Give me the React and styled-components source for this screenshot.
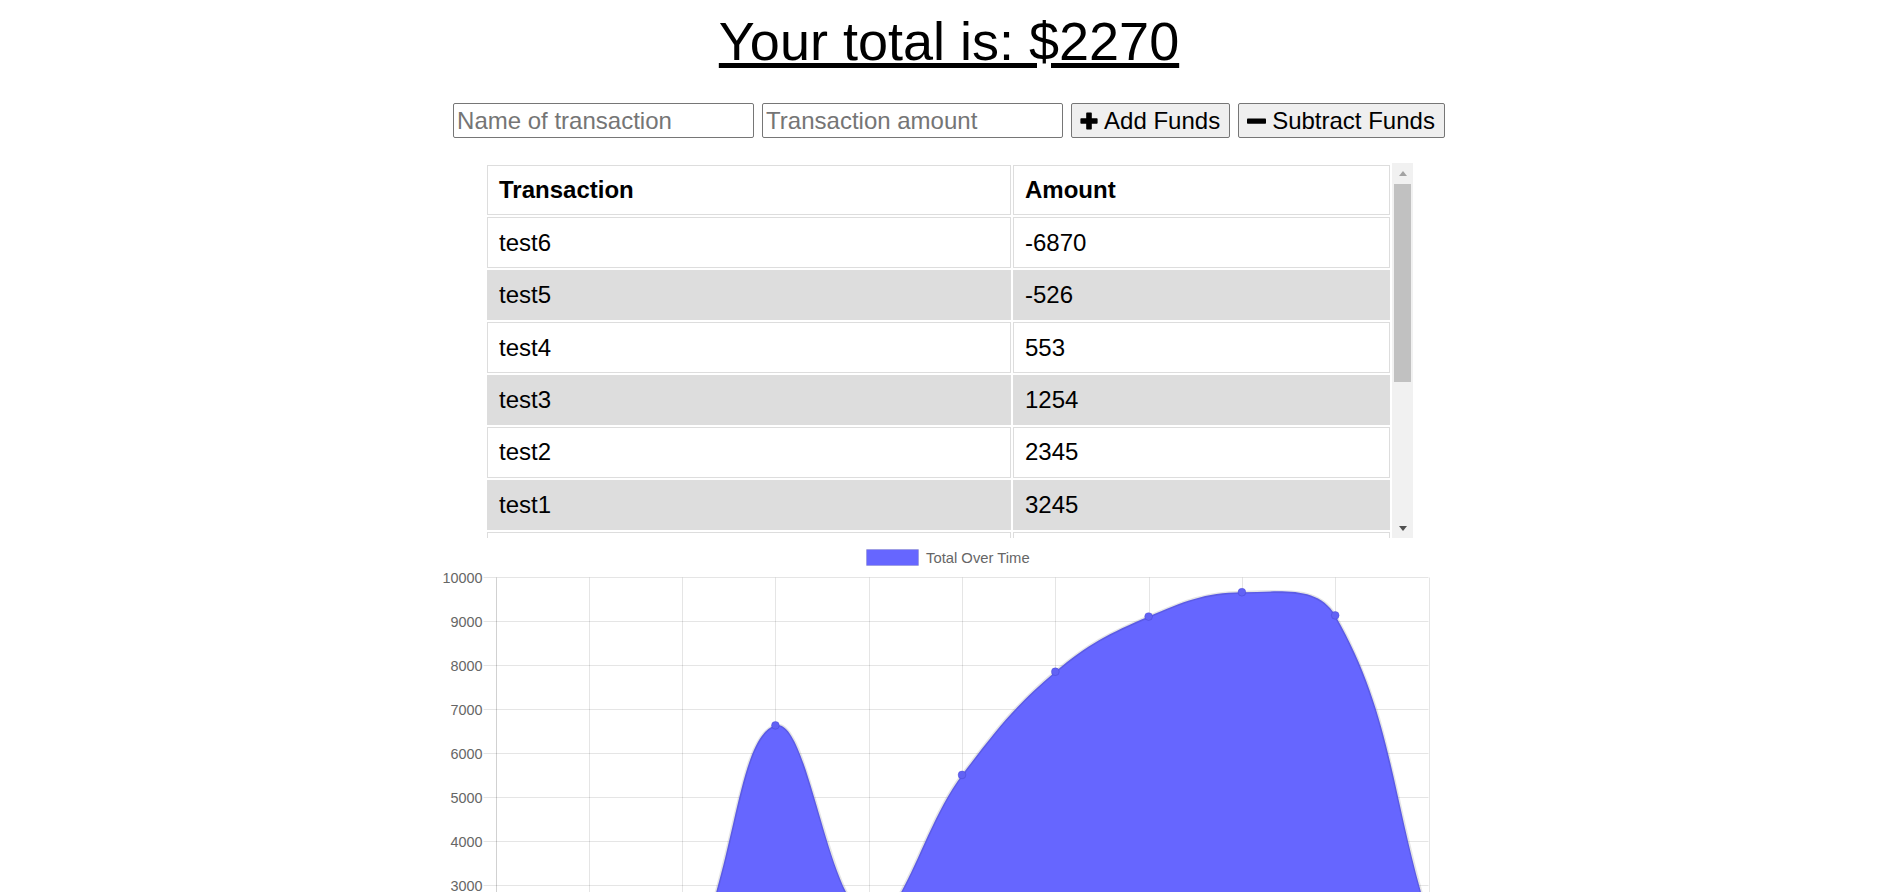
import React from 'react'
import styled, { createGlobalStyle } from 'styled-components'

const GlobalStyle = createGlobalStyle`
    html, body {
        margin: 0;
        padding: 0;
        background: #fff;
        font-family: "Liberation Sans", Arial, sans-serif;
        color: #000;
        overflow: hidden;
    }
`

const Page = styled.div`
    display: flex;
    flex-direction: column;
    align-items: center;
    padding-top: 10px;
    height: 892px;
    box-sizing: border-box;
    overflow: hidden;
`

const Title = styled.h1`
    margin: 0;
    font-size: 54px;
    line-height: 62px;
    font-weight: 400;
    text-decoration: underline;
`

const Form = styled.form`
    display: flex;
    gap: 8px;
    margin-top: 31px;
`

const TextInput = styled.input`
    width: 301px;
    height: 35px;
    box-sizing: border-box;
    padding: 1px 3px;
    border: 1px solid #767676;
    border-radius: 2px;
    font-family: inherit;
    font-size: 24px;
    color: #000;
    &::placeholder {
        color: #757575;
    }
`

const FundButton = styled.button`
    display: inline-flex;
    align-items: center;
    gap: 6px;
    height: 35px;
    box-sizing: border-box;
    padding: 0 9px 0 8px;
    border: 1px solid #767676;
    border-radius: 2px;
    background: #efefef;
    font-family: inherit;
    font-size: 24px;
    color: #000;
`

const TableFrame = styled.div`
    display: flex;
    width: 928px;
    height: 375px;
    margin-top: 25px;
`

const TableScroll = styled.div`
    flex: 1;
    overflow: hidden;
`

const Table = styled.table`
    width: 907px;
    table-layout: fixed;
    border-collapse: separate;
    border-spacing: 2px;
    font-size: 24px;
`

const Cell = styled.td`
    box-sizing: border-box;
    height: 50.45px;
    padding: 0 11px;
    border: 1px solid #ddd;
    text-align: left;
    line-height: 48px;
    white-space: nowrap;
    width: ${p => p.$first ? '524px' : 'auto'};
    font-weight: ${p => p.$head ? 700 : 400};
`

const Row = styled.tr`
    background: ${p => p.$shade ? '#ddd' : '#fff'};
`

const ScrollTrack = styled.div`
    display: flex;
    flex-direction: column;
    align-items: center;
    width: 21px;
    background: #f1f1f1;
`

const ArrowButton = styled.div`
    display: flex;
    align-items: center;
    justify-content: center;
    width: 21px;
    height: 21px;
    &::after {
        content: '';
        width: 0;
        height: 0;
        border-left: 4.5px solid transparent;
        border-right: 4.5px solid transparent;
        ${p => p.$down
            ? 'border-top: 5px solid #505050; margin-top: 2px;'
            : 'border-bottom: 5px solid #a3a3a3; margin-bottom: 1px;'}
    }
`

const Thumb = styled.div`
    width: 17px;
    height: 198px;
    background: #c1c1c1;
`

const Spacer = styled.div`
    flex: 1;
`

const ChartBox = styled.svg`
    display: block;
    flex-shrink: 0;
    font-family: "Liberation Sans", Arial, sans-serif;
`

const transactions = [
    { name: 'test6', value: -6870 },
    { name: 'test5', value: -526 },
    { name: 'test4', value: 553 },
    { name: 'test3', value: 1254 },
    { name: 'test2', value: 2345 },
    { name: 'test1', value: 3245 },
]

const totals = [0, 0, 1000, 6640, 2269, 5514, 7859, 9113, 9666, 9140, 2270]

const area = { left: 495.5, right: 1428.5, top: 577.5, bottom: 1017.5 }
const xAt = i => area.left + i * (area.right - area.left) / (totals.length - 1)
const yAt = v => area.top + (10000 - v) * 0.044

const clamp = (v, lo, hi) => Math.min(hi, Math.max(lo, v))

const splinePath = (pts, t = 0.4) => {
    const ctrl = pts.map((p, i) => {
        const prev = pts[i - 1] || p
        const next = pts[i + 1] || p
        const d01 = Math.hypot(p.x - prev.x, p.y - prev.y)
        const d12 = Math.hypot(next.x - p.x, next.y - p.y)
        const s01 = d01 + d12 ? d01 / (d01 + d12) : 0
        const s12 = d01 + d12 ? d12 / (d01 + d12) : 0
        const cap = (x, y) => ({ x: clamp(x, area.left, area.right), y: clamp(y, area.top, area.bottom) })
        return {
            prev: cap(p.x - t * s01 * (next.x - prev.x), p.y - t * s01 * (next.y - prev.y)),
            next: cap(p.x + t * s12 * (next.x - prev.x), p.y + t * s12 * (next.y - prev.y)),
        }
    })
    let d = `M${pts[0].x},${pts[0].y}`
    for (let i = 1; i < pts.length; i++) {
        const a = ctrl[i - 1].next
        const b = ctrl[i].prev
        d += ` C${a.x},${a.y} ${b.x},${b.y} ${pts[i].x},${pts[i].y}`
    }
    return d
}

const TotalChart = () => {
    const pts = totals.map((v, i) => ({ x: xAt(i), y: yAt(v) }))
    const line = splinePath(pts)
    const fill = `${line} L${pts[pts.length - 1].x},${area.bottom} L${pts[0].x},${area.bottom} Z`
    const grid = 'rgba(0,0,0,0.1)'
    const ticks = []
    for (let v = 10000; v >= 0; v -= 1000) ticks.push(v)
    return (
        <ChartBox width="1020" height="354" viewBox="439 538 1020 354">
            <defs>
                <clipPath id="plot">
                    <rect x={area.left} y={area.top - 6} width={area.right - area.left + 6} height={area.bottom - area.top + 6} />
                </clipPath>
            </defs>
            <rect x="866.5" y="549.5" width="52" height="16" fill="#6666ff" stroke={grid} />
            <text x="926" y="557.5" fontSize="14.8" fill="#666" dominantBaseline="central">Total Over Time</text>
            {ticks.map(v => (
                <line key={v} x1="483.5" x2={area.right} y1={yAt(v)} y2={yAt(v)} stroke={grid} />
            ))}
            {ticks.filter(v => v >= 3000).map(v => (
                <text key={v} x="482.5" y={yAt(v)} fontSize="14.4" fill="#666" textAnchor="end" dominantBaseline="central">{v}</text>
            ))}
            {totals.map((_, i) => (
                <line key={i} x1={Math.round(xAt(i)) + 0.5} x2={Math.round(xAt(i)) + 0.5} y1={area.top} y2={area.bottom + 12} stroke={i === 0 ? 'rgba(0,0,0,0.18)' : grid} />
            ))}
            <g clipPath="url(#plot)">
                <path d={fill} fill="#6666ff" />
                <path d={line} fill="none" stroke={grid} strokeWidth="3" />
                {pts.map((p, i) => (
                    <circle key={i} cx={p.x} cy={p.y} r="3.9" fill="#6262f4" stroke="rgba(60,60,200,0.35)" />
                ))}
            </g>
        </ChartBox>
    )
}

const PlusIcon = () => (
    <svg width="18" height="18" viewBox="0 0 18 18">
        <path d="M7 0.5h4a0.8 0.8 0 0 1 0.8 0.8V6.3h5a0.8 0.8 0 0 1 0.8 0.8v3.9a0.8 0.8 0 0 1-0.8 0.8h-5v5a0.8 0.8 0 0 1-0.8 0.8H7a0.8 0.8 0 0 1-0.8-0.8v-5h-5a0.8 0.8 0 0 1-0.8-0.8V7.1a0.8 0.8 0 0 1 0.8-0.8h5v-5A0.8 0.8 0 0 1 7 0.5z" fill="#000" />
    </svg>
)

const MinusIcon = () => (
    <svg width="19" height="18" viewBox="0 0 19 18">
        <rect x="0" y="6.4" width="19" height="5.4" rx="0.8" fill="#000" />
    </svg>
)

export default function App() {
    return (
        <Page>
            <GlobalStyle />
            <Title>Your total is: $2270</Title>
            <Form onSubmit={e => e.preventDefault()}>
                <TextInput type="text" placeholder="Name of transaction" />
                <TextInput type="text" placeholder="Transaction amount" />
                <FundButton type="button"><PlusIcon />Add Funds</FundButton>
                <FundButton type="button"><MinusIcon />Subtract Funds</FundButton>
            </Form>
            <TableFrame>
                <TableScroll>
                    <Table>
                        <thead>
                            <Row>
                                <Cell as="th" $head $first>Transaction</Cell>
                                <Cell as="th" $head>Amount</Cell>
                            </Row>
                        </thead>
                        <tbody>
                            {transactions.map((t, i) => (
                                <Row key={i} $shade={i % 2 === 1}>
                                    <Cell $first>{t.name}</Cell>
                                    <Cell>{t.value}</Cell>
                                </Row>
                            ))}
                            <Row>
                                <Cell $first />
                                <Cell />
                            </Row>
                        </tbody>
                    </Table>
                </TableScroll>
                <ScrollTrack>
                    <ArrowButton />
                    <Thumb />
                    <Spacer />
                    <ArrowButton $down />
                </ScrollTrack>
            </TableFrame>
            <TotalChart />
        </Page>
    )
}
